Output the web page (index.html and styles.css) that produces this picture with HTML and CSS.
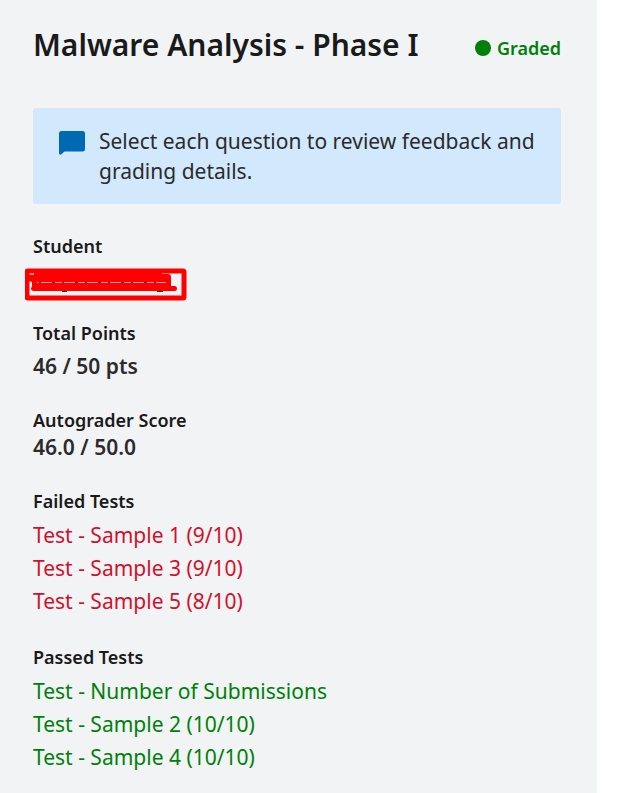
FILE: index.html
```html
<!DOCTYPE html>
<html lang="en">
<head>
    <meta charset="UTF-8">
    <meta name="viewport" content="width=device-width, initial-scale=1.0">
    <title>Malware Analysis - Phase I</title>
    <link rel="stylesheet" href="styles.css">
</head>
<body>

<main class="panel">
    <header class="header">
        <h1>Malware Analysis - Phase I</h1>
        <div class="status"><span class="dot"></span>Graded</div>
    </header>

    <div class="notice">
        <svg class="notice-icon" viewBox="0 0 26 24" aria-hidden="true">
            <path d="M2.5 0H23.5Q26 0 26 2.5V18Q26 20.5 23.5 20.5H5.5L2.5 23.3Q0 24.5 0 22V2.5Q0 0 2.5 0Z"/>
        </svg>
        <p>Select each question to review feedback and grading details.</p>
    </div>

    <section class="block">
        <h2>Student</h2>
        <div class="student spaced">
            <!-- marker strokes over the student name -->
            <svg class="redacted" viewBox="0 0 162 33" role="img" aria-label="Name hidden">
                <rect class="frame" x="2" y="3" width="157" height="27" rx="1"/>
                <path class="fill" d="M9 2H137V6H143Q146 6 146 9V18H150Q152 18 152 20.5T150 23H9Q6 23 6 20.5L7 18V14L4 13V6.5H9Z"/>
                <path class="gap" d="M5 6H9"/>
                <path class="gap" d="M12 14.5H141"/>
                <path class="ink" d="M14 14.5H140M141.5 12V16"/>
                <path class="tail" d="M37 23.5H42M132 23.5H138"/>
            </svg>
        </div>
    </section>

    <section class="block">
        <h2>Total Points</h2>
        <p class="score spaced">46 / 50 pts</p>
    </section>

    <section class="block">
        <h2>Autograder Score</h2>
        <p class="score">46.0 / 50.0</p>
    </section>

    <section class="block">
        <h2>Failed Tests</h2>
        <ul class="tests failed spaced">
            <li><a href="#sample-1">Test - Sample 1 (9/10)</a></li>
            <li><a href="#sample-3">Test - Sample 3 (9/10)</a></li>
            <li><a href="#sample-5">Test - Sample 5 (8/10)</a></li>
        </ul>
    </section>

    <section class="block">
        <h2>Passed Tests</h2>
        <ul class="tests passed spaced">
            <li><a href="#submissions">Test - Number of Submissions</a></li>
            <li><a href="#sample-2">Test - Sample 2 (10/10)</a></li>
            <li><a href="#sample-4">Test - Sample 4 (10/10)</a></li>
        </ul>
    </section>
</main>

</body>
</html>
```
FILE: styles.css
```css
* {
    box-sizing: border-box;
}
body {
    font-family: 'Noto Sans', sans-serif;
    font-size: 21px;
    line-height: 30px;
    background: #ffffff;
    margin: 0;
    color: #2b2b2b;
}
h1, h2, p, ul {
    margin: 0;
    padding: 0;
}
.panel {
    min-height: 100vh;
    margin-right: 21px;
    padding: 24px 36px 0 33px;
    background: #f1f3f5;
    overflow: hidden;
}
.header {
    display: flex;
    justify-content: space-between;
    align-items: center;
    margin-bottom: 42px;
}
h1 {
    font-size: 30px;
    line-height: 42px;
    font-weight: 600;
    color: #1a1a1a;
}
.status {
    display: flex;
    align-items: center;
    gap: 6px;
    padding-top: 6px;
    font-size: 18px;
    font-weight: 600;
    color: #008009;
}
.dot {
    width: 16px;
    height: 16px;
    border-radius: 50%;
    background: #008009;
}
.notice {
    display: flex;
    gap: 14px;
    padding: 18px 24px 18px 26px;
    margin-bottom: 30px;
    background: #d2e8fc;
    border-radius: 3px;
}
.notice-icon {
    flex: none;
    width: 26px;
    height: 24px;
    margin-top: 5px;
    fill: #0069b4;
}
.block {
    margin-bottom: 27px;
}
.block:last-child {
    margin-bottom: 18px;
}
h2 {
    font-size: 18px;
    line-height: 24px;
    font-weight: 600;
    color: #1a1a1a;
}
.spaced {
    margin-top: 6px;
}
.student {
    position: relative;
    height: 30px;
}
.redacted {
    position: absolute;
    top: 4px;
    left: -8px;
    width: 162px;
    height: 33px;
}
.redacted path {
    fill: none;
}
.redacted .frame {
    fill: none;
    stroke: #ff0000;
    stroke-width: 5;
}
.redacted .fill {
    fill: #ff0000;
}
.redacted .gap {
    stroke: #f5a9a9;
}
.redacted .ink {
    stroke: #6b2036;
    stroke-dasharray: 2 11 3 7;
}
.redacted .tail {
    stroke: #5a1a1a;
}
.score {
    font-weight: 600;
}
.tests {
    list-style: none;
    line-height: 33px;
}
.tests a {
    text-decoration: none;
}
.failed a {
    color: #d0112b;
}
.passed a {
    color: #008009;
}
```
